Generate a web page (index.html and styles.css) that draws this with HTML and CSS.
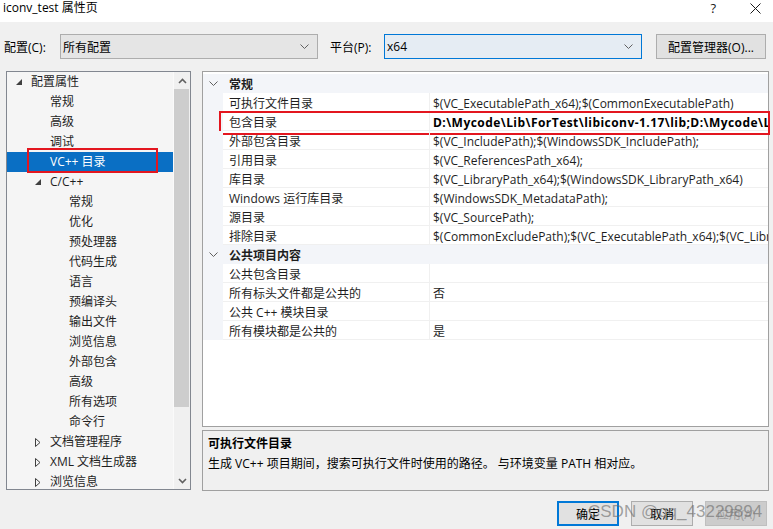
FILE: index.html
```html
<!DOCTYPE html>
<html lang="zh-CN">
<head>
<meta charset="utf-8">
<title>iconv_test 属性页</title>
<link rel="stylesheet" href="styles.css">
</head>
<body>
<div class="window">
  <div class="titlebar">
    <span class="title">iconv_test 属性页</span>
    <span class="cap-help">?</span>
    <span class="cap-close">
      <svg width="11" height="11" viewBox="0 0 11 11"><path d="M0.5 0.5 L10.5 10.5 M10.5 0.5 L0.5 10.5" stroke="#1a1a1a" stroke-width="1" fill="none"/></svg>
    </span>
  </div>

  <div class="toolbar">
    <span class="tl-label">配置(C):</span>
    <div class="combo">
      <span class="combo-text">所有配置</span>
      <svg class="combo-arrow" width="9" height="5" viewBox="0 0 9 5"><path d="M0.5 0.5 L4.5 4.5 L8.5 0.5" stroke="#606060" fill="none"/></svg>
    </div>
    <span class="tl-label tl-platform">平台(P):</span>
    <div class="combo combo-focus">
      <span class="combo-text">x64</span>
      <svg class="combo-arrow" width="9" height="5" viewBox="0 0 9 5"><path d="M0.5 0.5 L4.5 4.5 L8.5 0.5" stroke="#606060" fill="none"/></svg>
    </div>
    <button class="btn btn-mgr">配置管理器(O)...</button>
  </div>

  <div class="main">
    <div class="tree">
      <ul class="tree-list">
        <li class="node lv0"><span class="twisty"><svg width="6" height="6" viewBox="0 0 6 6"><polygon points="6,0 6,6 0,6" fill="#404040"/></svg></span>配置属性</li>
        <li class="node lv1"><span class="twisty"></span>常规</li>
        <li class="node lv1"><span class="twisty"></span>高级</li>
        <li class="node lv1"><span class="twisty"></span>调试</li>
        <li class="node lv1 selected"><span class="twisty"></span>VC++ 目录<span class="mark-box"></span></li>
        <li class="node lv1"><span class="twisty"><svg width="6" height="6" viewBox="0 0 6 6"><polygon points="6,0 6,6 0,6" fill="#404040"/></svg></span>C/C++</li>
        <li class="node lv2"><span class="twisty"></span>常规</li>
        <li class="node lv2"><span class="twisty"></span>优化</li>
        <li class="node lv2"><span class="twisty"></span>预处理器</li>
        <li class="node lv2"><span class="twisty"></span>代码生成</li>
        <li class="node lv2"><span class="twisty"></span>语言</li>
        <li class="node lv2"><span class="twisty"></span>预编译头</li>
        <li class="node lv2"><span class="twisty"></span>输出文件</li>
        <li class="node lv2"><span class="twisty"></span>浏览信息</li>
        <li class="node lv2"><span class="twisty"></span>外部包含</li>
        <li class="node lv2"><span class="twisty"></span>高级</li>
        <li class="node lv2"><span class="twisty"></span>所有选项</li>
        <li class="node lv2"><span class="twisty"></span>命令行</li>
        <li class="node lv1"><span class="twisty"><svg width="6" height="9" viewBox="0 0 6 9"><polygon points="0.5,0.5 5,4.5 0.5,8.5" fill="none" stroke="#404040"/></svg></span>文档管理程序</li>
        <li class="node lv1"><span class="twisty"><svg width="6" height="9" viewBox="0 0 6 9"><polygon points="0.5,0.5 5,4.5 0.5,8.5" fill="none" stroke="#404040"/></svg></span>XML 文档生成器</li>
        <li class="node lv1"><span class="twisty"><svg width="6" height="9" viewBox="0 0 6 9"><polygon points="0.5,0.5 5,4.5 0.5,8.5" fill="none" stroke="#404040"/></svg></span>浏览信息</li>
      </ul>
      <div class="vscroll">
        <div class="sb-arrow"><svg width="9" height="6" viewBox="0 0 9 6"><path d="M1 5 L4.5 1.5 L8 5" stroke="#606060" stroke-width="1.6" fill="none"/></svg></div>
        <div class="sb-track"><div class="sb-thumb"></div></div>
        <div class="sb-arrow"><svg width="9" height="6" viewBox="0 0 9 6"><path d="M1 1 L4.5 4.5 L8 1" stroke="#606060" stroke-width="1.6" fill="none"/></svg></div>
      </div>
    </div>

    <div class="right">
      <div class="grid">
        <div class="row cat">
          <span class="gutter"><svg width="9" height="5" viewBox="0 0 9 5"><path d="M0.5 0.5 L4.5 4.5 L8.5 0.5" stroke="#606060" fill="none"/></svg></span>
          <span class="cat-name">常规</span>
        </div>
        <div class="row"><span class="gutter"></span><span class="name">可执行文件目录</span><span class="value">$(VC_ExecutablePath_x64);$(CommonExecutablePath)</span></div>
        <div class="row hl"><span class="gutter"></span><span class="name">包含目录</span><span class="value strong">D:\Mycode\Lib\ForTest\libiconv-1.17\lib;D:\Mycode\Lib\ForTest\libiconv-1.17\include</span><span class="mark-box"></span></div>
        <div class="row"><span class="gutter"></span><span class="name">外部包含目录</span><span class="value">$(VC_IncludePath);$(WindowsSDK_IncludePath);</span></div>
        <div class="row"><span class="gutter"></span><span class="name">引用目录</span><span class="value">$(VC_ReferencesPath_x64);</span></div>
        <div class="row"><span class="gutter"></span><span class="name">库目录</span><span class="value">$(VC_LibraryPath_x64);$(WindowsSDK_LibraryPath_x64)</span></div>
        <div class="row"><span class="gutter"></span><span class="name">Windows 运行库目录</span><span class="value">$(WindowsSDK_MetadataPath);</span></div>
        <div class="row"><span class="gutter"></span><span class="name">源目录</span><span class="value">$(VC_SourcePath);</span></div>
        <div class="row"><span class="gutter"></span><span class="name">排除目录</span><span class="value">$(CommonExcludePath);$(VC_ExecutablePath_x64);$(VC_LibraryPath_x64)</span></div>
        <div class="row cat">
          <span class="gutter"><svg width="9" height="5" viewBox="0 0 9 5"><path d="M0.5 0.5 L4.5 4.5 L8.5 0.5" stroke="#606060" fill="none"/></svg></span>
          <span class="cat-name">公共项目内容</span>
        </div>
        <div class="row"><span class="gutter"></span><span class="name">公共包含目录</span><span class="value"></span></div>
        <div class="row"><span class="gutter"></span><span class="name">所有标头文件都是公共的</span><span class="value">否</span></div>
        <div class="row"><span class="gutter"></span><span class="name">公共 C++ 模块目录</span><span class="value"></span></div>
        <div class="row"><span class="gutter"></span><span class="name">所有模块都是公共的</span><span class="value">是</span></div>
      </div>
      <div class="desc">
        <div class="desc-title">可执行文件目录</div>
        <div class="desc-text">生成 VC++ 项目期间，搜索可执行文件时使用的路径。 与环境变量 PATH 相对应。</div>
      </div>
    </div>
  </div>

  <div class="footer">
    <button class="btn btn-ok">确定</button>
    <button class="btn">取消</button>
    <button class="btn btn-disabled">应用(A)</button>
  </div>

  <div class="watermark">CSDN @qq_43229894</div>
</div>
</body>
</html>
```

FILE: styles.css
```css
* { box-sizing: border-box; }

html, body {
  margin: 0;
  padding: 0;
}

body {
  background: #f0f0f0;
  font-family: "Open Sans", "Noto Sans CJK SC", sans-serif;
  font-size: 12px;
  color: #1e1e1e;
}

.window {
  position: relative;
  width: 773px;
  height: 529px;
  overflow: hidden;
  background: #f0f0f0;
}

/* ---- caption ---- */
.titlebar {
  height: 22px;
  background: #ffffff;
  display: flex;
  align-items: flex-start;
  padding-left: 3px;
}
.title {
  line-height: 16px;
  color: #000;
}
.cap-help {
  margin-left: auto;
  line-height: 16px;
  font-size: 13px;
  color: #1a1a1a;
}
.cap-close {
  display: flex;
  margin-left: 34px;
  margin-right: 12px;
  padding-top: 3px;
}

/* ---- configuration bar ---- */
.toolbar {
  display: flex;
  align-items: center;
  height: 25px;
  margin-top: 12px;
  padding-left: 4px;
}
.tl-label {
  width: 56px;
  color: #000;
}
.tl-platform {
  margin-left: 12px;
  width: 54px;
}
.combo {
  width: 258px;
  height: 25px;
  border: 1px solid #adadad;
  background: #e5e5e5;
  display: flex;
  align-items: center;
  padding: 0 8px 0 2px;
}
.combo-focus {
  border-color: #0078d7;
  background: #e5ecf3;
}
.combo-text {
  flex: 1;
  color: #000;
}
.combo-arrow { display: block; }

.btn {
  font-family: inherit;
  font-size: 12px;
  color: #000;
  background: #e1e1e1;
  border: 1px solid #adadad;
  padding: 0;
  height: 25px;
}
.btn-mgr {
  width: 110px;
  margin-left: 14px;
}

/* ---- main area ---- */
.main {
  display: flex;
  margin-top: 12px;
  padding-left: 6px;
  gap: 11px;
}

.tree {
  width: 185px;
  height: 419px;
  border: 1px solid #828790;
  background: #f5f5f5;
  display: flex;
  overflow: hidden;
}
.tree-list {
  list-style: none;
  margin: 0;
  padding: 0;
  flex: 1;
  overflow: hidden;
}
.node {
  position: relative;
  height: 20px;
  line-height: 20px;
  display: flex;
  align-items: center;
  white-space: nowrap;
  color: #1e1e1e;
}
.lv0 { padding-left: 9px; }
.lv1 { padding-left: 28px; }
.lv2 { padding-left: 47px; }
.twisty {
  width: 15px;
  height: 20px;
  display: flex;
  align-items: center;
  flex-shrink: 0;
}
.node.selected {
  background: #0a6fc4;
  color: #ffffff;
}
.mark-box {
  position: absolute;
  border: 2px solid #e3161f;
  pointer-events: none;
}
.node .mark-box {
  left: 20px;
  width: 131px;
  top: -4px;
  bottom: -1px;
}

.vscroll {
  width: 17px;
  display: flex;
  flex-direction: column;
  background: #f0f0f0;
  border-left: 1px solid #fafafa;
}
.sb-arrow {
  height: 17px;
  display: flex;
  align-items: center;
  justify-content: center;
}
.sb-track {
  flex: 1;
}
.sb-thumb {
  height: 318px;
  margin: 0 1px 0 0;
  background: #cdcdcd;
}

.right {
  display: flex;
  flex-direction: column;
  gap: 3px;
}

/* ---- property grid ---- */
.grid {
  width: 567px;
  height: 356px;
  border: 1px solid #a0a0a0;
  background: #ffffff;
  padding-top: 2px;
}
.row {
  position: relative;
  display: flex;
  height: 19px;
  line-height: 22px;
  white-space: nowrap;
}
.gutter {
  width: 20px;
  flex-shrink: 0;
  background: #f3f5f9;
  display: flex;
  align-items: center;
  justify-content: center;
  padding-bottom: 1px;
}
.name {
  width: 206px;
  flex-shrink: 0;
  padding-left: 6px;
  border-bottom: 1px solid #f0f0f0;
  overflow: hidden;
  color: #1e1e1e;
}
.value {
  flex: 1;
  padding-left: 3px;
  border-left: 1px solid #f0f0f0;
  border-bottom: 1px solid #f0f0f0;
  overflow: hidden;
  color: #1e1e1e;
}
.value.strong {
  font-weight: 700;
  letter-spacing: 0.45px;
  color: #000;
}
.row.cat {
  background: #f3f5f9;
}
.cat-name {
  padding-left: 6px;
  font-weight: 700;
  color: #1e1e1e;
  overflow: hidden;
}
.row .mark-box {
  left: 16px;
  right: -2px;
  top: -1px;
  bottom: -4px;
}

.desc {
  width: 567px;
  height: 61px;
  border: 1px solid #a0a0a0;
  background: #f0f0f0;
  padding: 3px 0 0 5px;
}
.desc-title {
  font-weight: 700;
  line-height: 20px;
  color: #000;
}
.desc-text {
  line-height: 19px;
  color: #000;
}

/* ---- dialog buttons ---- */
.footer {
  display: flex;
  justify-content: flex-end;
  gap: 12px;
  margin-top: 10px;
  padding-right: 6px;
}
.footer .btn {
  width: 62px;
  height: 25px;
}
.btn-ok {
  border: 2px solid #0078d7;
}
.btn-disabled {
  background: #cccccc;
  border-color: #bfbfbf;
  color: #a0a0a0;
}

.watermark {
  position: absolute;
  left: 588px;
  top: 502px;
  font-family: "Liberation Sans", sans-serif;
  font-size: 17px;
  line-height: 20px;
  color: rgba(105, 105, 105, 0.6);
  white-space: nowrap;
  pointer-events: none;
}
```
